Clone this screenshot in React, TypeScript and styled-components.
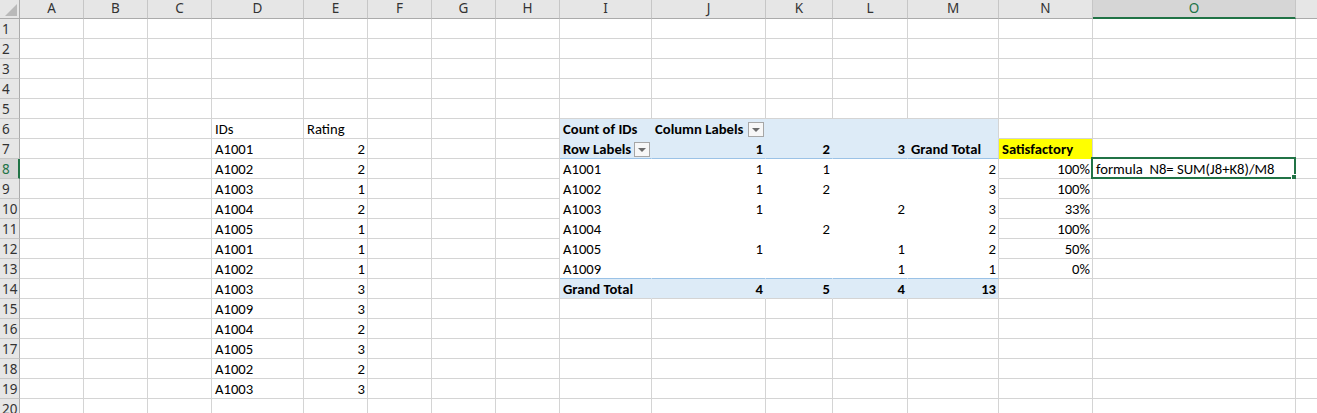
import React from 'react';
import styled, { createGlobalStyle } from 'styled-components';

const GlobalStyle = createGlobalStyle`
  html, body {
    margin: 0;
    padding: 0;
    background: #ffffff;
    overflow: hidden;
  }
`;

const GRID = '#d4d4d4';
const HEAD_LINE = '#ababab';
const PIVOT_FILL = '#ddebf7';
const PIVOT_LINE = '#9bc2e6';
const EXCEL_GREEN = '#217346';
const CELL_FONT = 'Carlito, Lato, "Liberation Sans", sans-serif';

const columns: [string, number][] = [
  ['A', 64], ['B', 64], ['C', 64], ['D', 92], ['E', 64], ['F', 64], ['G', 64], ['H', 64],
  ['I', 92], ['J', 114], ['K', 67], ['L', 75], ['M', 91], ['N', 94], ['O', 203], ['P', 60],
];
const ROWS = 20;
const SELECTED_COL = 'O';
const SELECTED_ROW = 8;

type CellSpec = {
  v?: string;
  right?: boolean;
  bold?: boolean;
  fill?: string;
  drop?: boolean;
  bottom?: string;
  rightLine?: string;
  selected?: boolean;
};

const cells: Record<string, CellSpec> = {};
const put = (ref: string, v: string, opts: CellSpec = {}) => {
  cells[ref] = { ...(cells[ref] || {}), v, ...opts };
};

// source data
const ids = ['A1001', 'A1002', 'A1003', 'A1004', 'A1005', 'A1001', 'A1002', 'A1003', 'A1009', 'A1004', 'A1005', 'A1002', 'A1003'];
const ratings = [2, 2, 1, 2, 1, 1, 1, 3, 3, 2, 3, 2, 3];
put('D6', 'IDs');
put('E6', 'Rating');
ids.forEach((id, i) => {
  put(`D${7 + i}`, id);
  put(`E${7 + i}`, String(ratings[i]), { right: true });
});

// pivot table area I6:M14
const pivotCols = ['I', 'J', 'K', 'L', 'M'];
for (let r = 6; r <= 14; r++) {
  pivotCols.forEach((c) => {
    const head = r <= 7 || r === 14;
    let bottom = head ? PIVOT_FILL : '#ffffff';
    if (r === 7 || r === 13) bottom = PIVOT_LINE;
    if (r === 14) bottom = GRID;
    cells[`${c}${r}`] = {
      fill: head ? PIVOT_FILL : '#ffffff',
      bottom,
      rightLine: c === 'M' ? GRID : head ? PIVOT_FILL : '#ffffff',
    };
  });
}
put('I6', 'Count of IDs', { bold: true });
put('J6', 'Column Labels', { bold: true, drop: true });
put('I7', 'Row Labels', { bold: true, drop: true });
put('J7', '1', { bold: true, right: true });
put('K7', '2', { bold: true, right: true });
put('L7', '3', { bold: true, right: true });
put('M7', 'Grand Total', { bold: true });
put('N7', 'Satisfactory', { bold: true, fill: '#ffff00', bottom: '#ffff00' });

const pivotRows: [string, string, string, string, string, string][] = [
  ['A1001', '1', '1', '', '2', '100%'],
  ['A1002', '1', '2', '', '3', '100%'],
  ['A1003', '1', '', '2', '3', '33%'],
  ['A1004', '', '2', '', '2', '100%'],
  ['A1005', '1', '', '1', '2', '50%'],
  ['A1009', '', '', '1', '1', '0%'],
];
pivotRows.forEach((row, i) => {
  const r = 8 + i;
  put(`I${r}`, row[0]);
  ['J', 'K', 'L', 'M'].forEach((c, k) => put(`${c}${r}`, row[k + 1], { right: true }));
  put(`N${r}`, row[5], { right: true });
});
put('I14', 'Grand Total', { bold: true });
put('J14', '4', { bold: true, right: true });
put('K14', '5', { bold: true, right: true });
put('L14', '4', { bold: true, right: true });
put('M14', '13', { bold: true, right: true });

put('O8', 'formula  N8= SUM(J8+K8)/M8', { selected: true });

const Sheet = styled.div`
  display: grid;
  grid-template-columns: 20px ${columns.map(([, w]) => `${w}px`).join(' ')};
  grid-template-rows: 19px repeat(${ROWS}, 20px);
  width: 1317px;
  height: 413px;
  overflow: hidden;
  background: #ffffff;
`;

const Corner = styled.div`
  background: #e6e6e6;
  border-right: 1px solid ${HEAD_LINE};
  border-bottom: 1px solid ${HEAD_LINE};
  box-sizing: border-box;
  position: relative;

  &::after {
    content: '';
    position: absolute;
    right: 2px;
    bottom: 2px;
    width: 0;
    height: 0;
    border-left: 12px solid transparent;
    border-bottom: 12px solid #b9b9b9;
  }
`;

const ColHead = styled.div<{ $active: boolean }>`
  display: flex;
  align-items: center;
  justify-content: center;
  box-sizing: border-box;
  background: ${(p) => (p.$active ? '#d6d6d6' : '#e6e6e6')};
  border-right: 1px solid #c6c6c6;
  border-bottom: ${(p) => (p.$active ? `2px solid ${EXCEL_GREEN}` : `1px solid ${HEAD_LINE}`)};
  color: ${(p) => (p.$active ? EXCEL_GREEN : '#333333')};
  font-family: "Noto Sans", "Open Sans", sans-serif;
  font-size: 13.5px;
  line-height: 1;
  padding-top: ${(p) => (p.$active ? '1px' : '0')};
`;

const RowHead = styled.div<{ $active: boolean }>`
  display: flex;
  align-items: flex-end;
  box-sizing: border-box;
  padding: 0 0 1px 2px;
  background: ${(p) => (p.$active ? '#d6d6d6' : '#e6e6e6')};
  border-right: ${(p) => (p.$active ? `2px solid ${EXCEL_GREEN}` : `1px solid ${HEAD_LINE}`)};
  border-bottom: 1px solid #c6c6c6;
  color: ${(p) => (p.$active ? EXCEL_GREEN : '#333333')};
  font-family: "Noto Sans", "Open Sans", sans-serif;
  font-size: 13.5px;
  line-height: 16px;
`;

const Cell = styled.div<{
  $right?: boolean;
  $bold?: boolean;
  $fill?: string;
  $bottom?: string;
  $rightLine?: string;
  $split?: boolean;
}>`
  position: relative;
  display: flex;
  align-items: flex-end;
  justify-content: ${(p) => (p.$split ? 'space-between' : p.$right ? 'flex-end' : 'flex-start')};
  box-sizing: border-box;
  padding: 0 2px 0 3px;
  background: ${(p) => p.$fill || '#ffffff'};
  border-right: 1px solid ${(p) => p.$rightLine || GRID};
  border-bottom: 1px solid ${(p) => p.$bottom || GRID};
  font-family: ${CELL_FONT};
  font-size: 14.67px;
  font-weight: ${(p) => (p.$bold ? 700 : 400)};
  line-height: 17px;
  color: #000000;
  white-space: pre;
  overflow: visible;
  z-index: ${(p) => (p.$split ? 1 : 0)};
`;

const DropButton = styled.span`
  display: flex;
  align-items: center;
  justify-content: center;
  width: 16px;
  height: 15px;
  margin: 0 -1px 1px 0;
  box-sizing: border-box;
  border: 1px solid #a6a6a6;
  background: #f7f7f7;
  align-self: flex-end;

  &::after {
    content: '';
    width: 0;
    height: 0;
    border-left: 4px solid transparent;
    border-right: 4px solid transparent;
    border-top: 4px solid #6b6b6b;
  }
`;

const SelectionBox = styled.div`
  position: absolute;
  left: -2px;
  top: -2px;
  right: -1px;
  bottom: -1px;
  border: 2px solid ${EXCEL_GREEN};
  pointer-events: none;
  z-index: 3;

  &::after {
    content: '';
    position: absolute;
    right: -4px;
    bottom: -4px;
    width: 5px;
    height: 5px;
    background: ${EXCEL_GREEN};
    border: 1px solid #ffffff;
  }
`;

export default function App() {
  const rows = Array.from({ length: ROWS }, (_, i) => i + 1);
  return (
    <>
      <GlobalStyle />
      <Sheet>
        <Corner />
        {columns.map(([c]) => (
          <ColHead key={c} $active={c === SELECTED_COL}>{c !== 'P' ? c : ''}</ColHead>
        ))}
        {rows.map((r) => (
          <React.Fragment key={r}>
            <RowHead $active={r === SELECTED_ROW}>{r}</RowHead>
            {columns.map(([c]) => {
              const spec = cells[`${c}${r}`] || {};
              return (
                <Cell
                  key={c}
                  $right={spec.right}
                  $bold={spec.bold}
                  $fill={spec.fill}
                  $bottom={spec.bottom}
                  $rightLine={spec.rightLine}
                  $split={spec.drop}
                >
                  {spec.v}
                  {spec.drop && <DropButton />}
                  {spec.selected && <SelectionBox />}
                </Cell>
              );
            })}
          </React.Fragment>
        ))}
      </Sheet>
    </>
  );
}
